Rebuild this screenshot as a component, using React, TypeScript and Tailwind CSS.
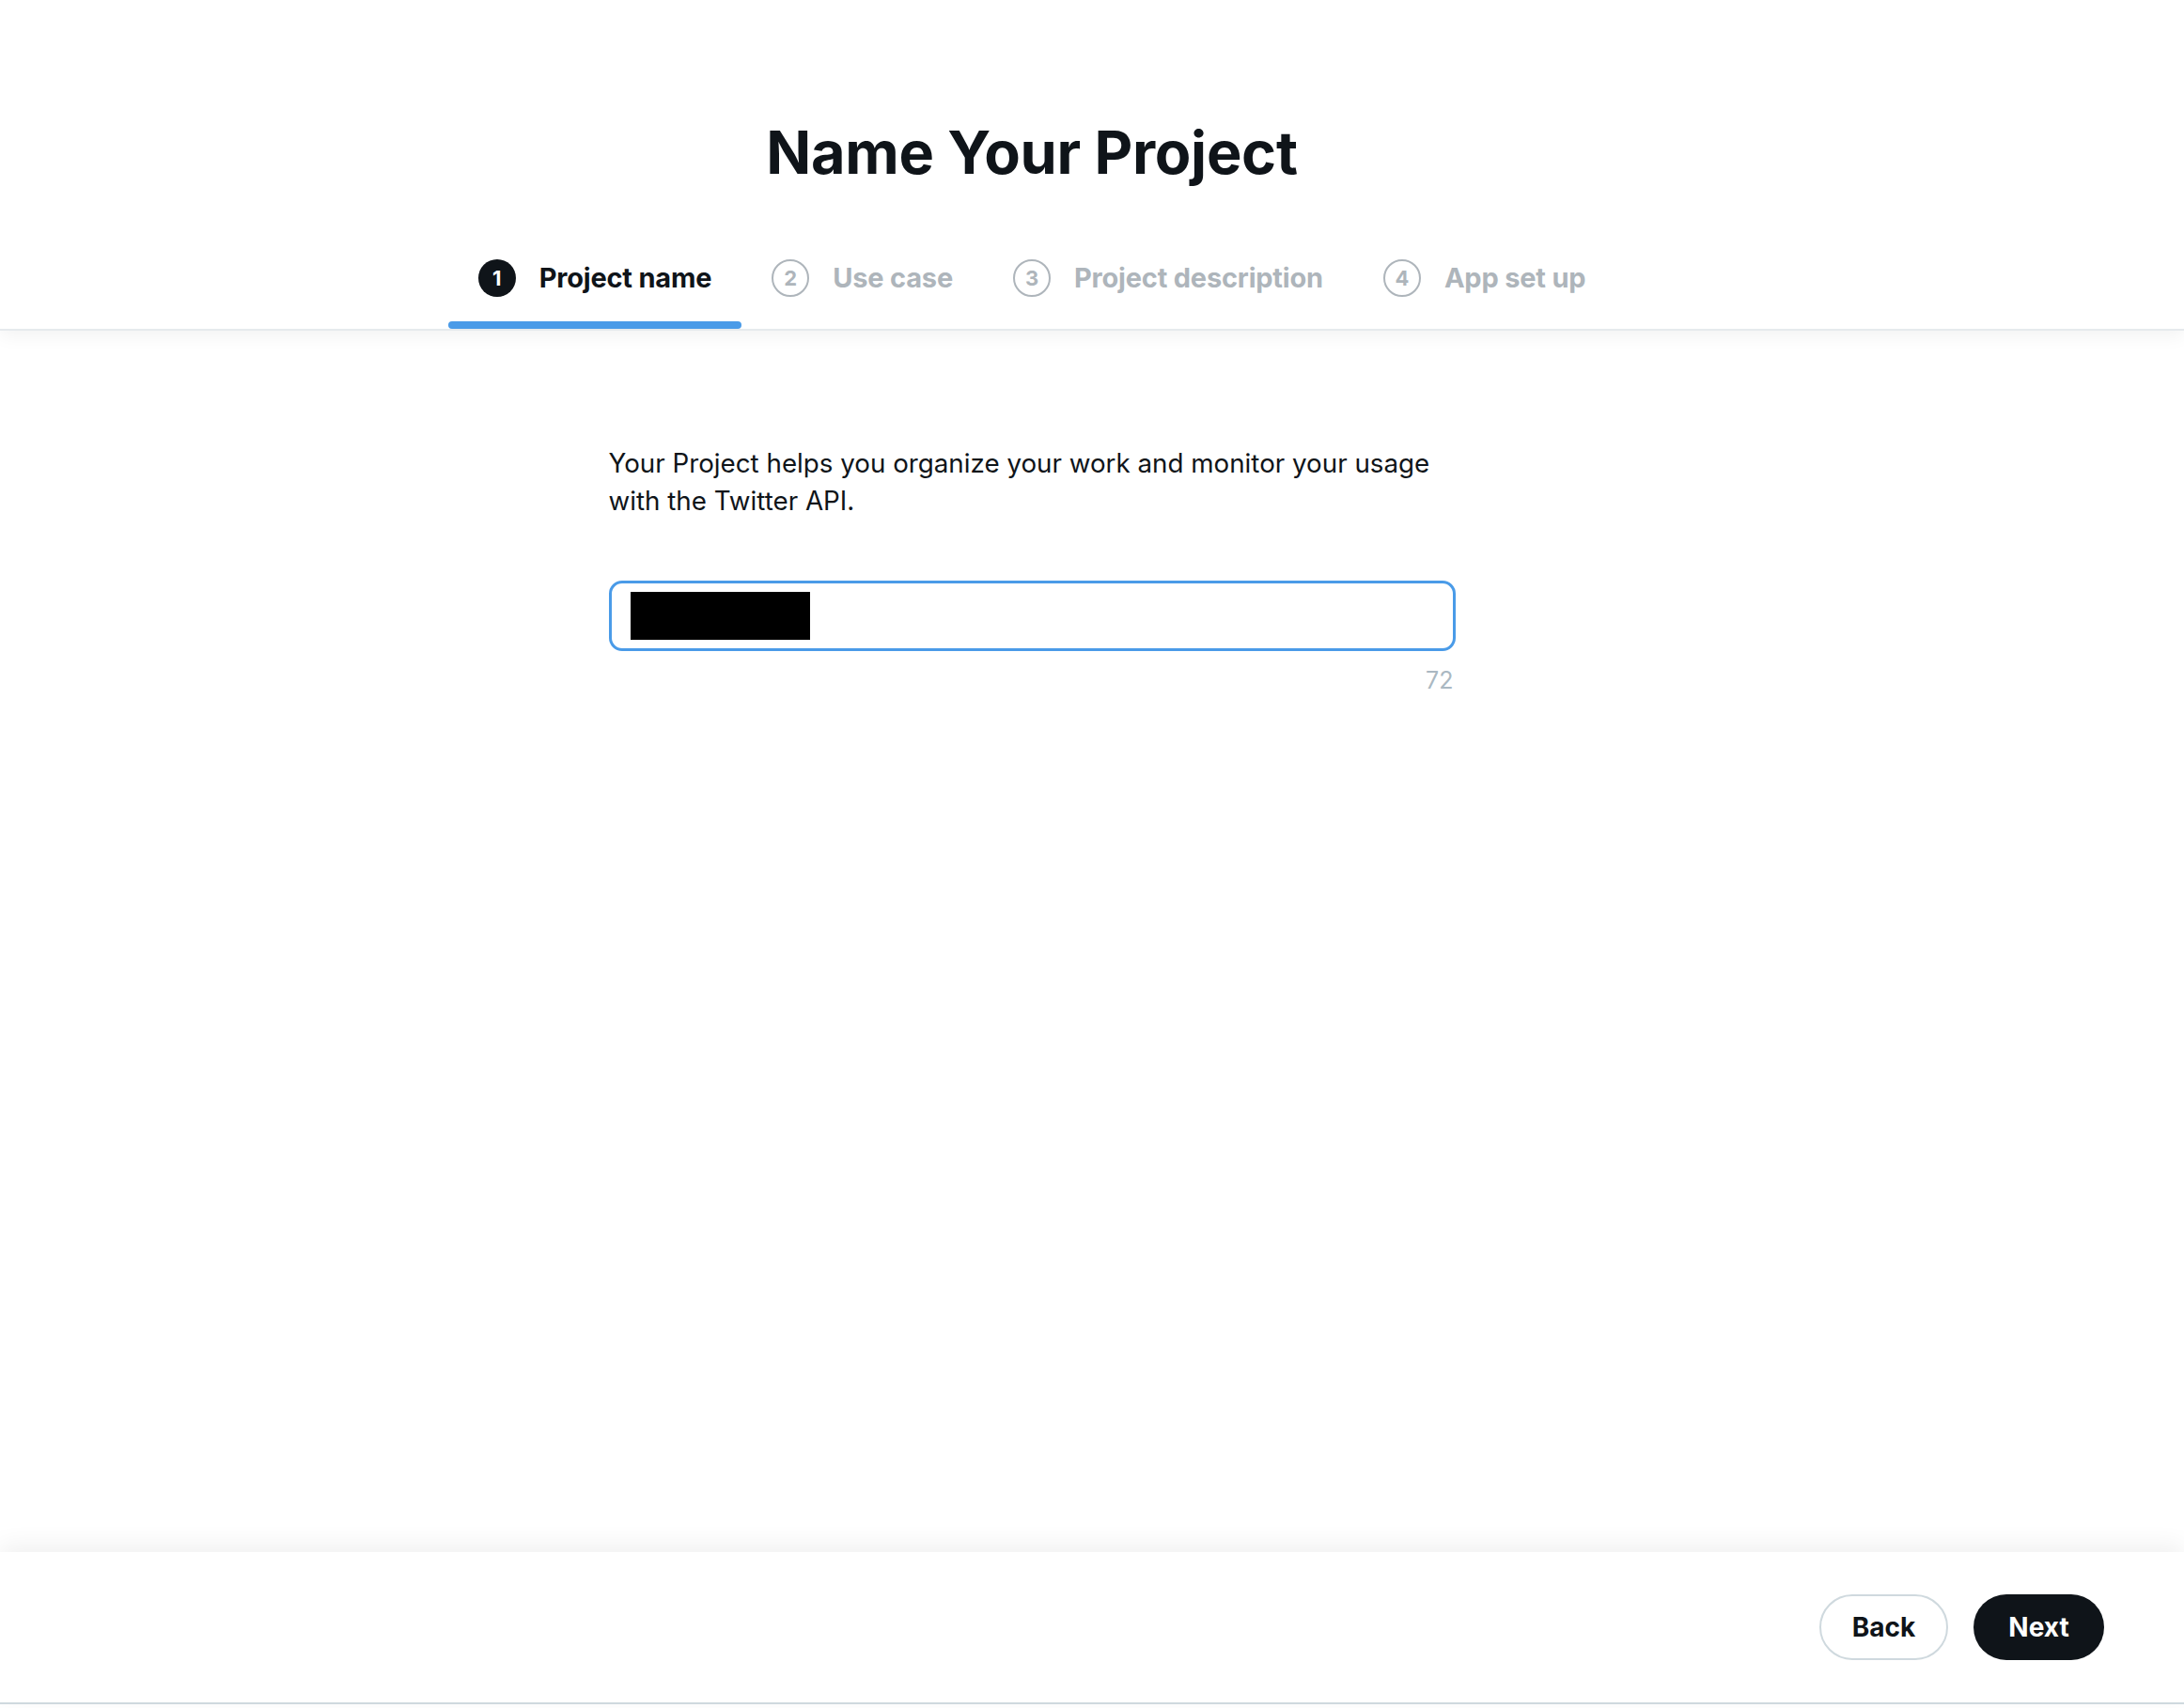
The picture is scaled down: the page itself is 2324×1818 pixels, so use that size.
import React from 'react';

const steps = [
  { n: 1, label: 'Project name' },
  { n: 2, label: 'Use case' },
  { n: 3, label: 'Project description' },
  { n: 4, label: 'App set up' },
];

function StepTab({ n, label, active }: { n: number; label: string; active: boolean }) {
  return (
    <div className="flex flex-col">
      <div className="mt-[76px] flex h-[40px] items-center gap-[25px] px-8">
        <span
          className={
            active
              ? 'flex h-[40px] w-[40px] items-center justify-center rounded-full bg-[#0f1419] text-[22px] font-bold text-white'
              : 'flex h-[40px] w-[40px] items-center justify-center rounded-full border-2 border-[#aeb5bb] text-[22px] font-bold text-[#aeb5bb]'
          }
        >
          {n}
        </span>
        <span
          className={
            active
              ? 'text-[29px] font-bold leading-[40px] tracking-[-0.2px] text-[#0f1419]'
              : 'text-[29px] font-bold leading-[40px] tracking-[-0.2px] text-[#aeb5bb]'
          }
        >
          {label}
        </span>
      </div>
      <div
        className={active ? 'mt-[26px] h-2 rounded-full bg-[#4a9be8]' : 'mt-[26px] h-2'}
      />
    </div>
  );
}

export default function App() {
  return (
    <div
      className="flex h-[1818px] flex-col bg-white text-[#0f1419]"
      style={{ fontFamily: 'Inter, "Noto Sans", sans-serif' }}
    >
      <header className="relative z-10 border-b-2 border-[#e6eaed] bg-white shadow-[0_6px_18px_rgba(0,0,0,0.05)]">
        <div className="flex flex-col items-center pr-[128px]">
          <h1 className="pt-[124px] text-[63px] font-bold leading-[76px] tracking-[-0.3px]">
            Name Your Project
          </h1>
          <nav className="flex">
            {steps.map((s) => (
              <StepTab key={s.n} n={s.n} label={s.label} active={s.n === 1} />
            ))}
          </nav>
        </div>
      </header>

      <main className="flex-1 pr-[128px]">
        <div className="mx-auto w-[901px] pt-[121px]">
          <p className="text-[27.75px] leading-[40px]">
            Your Project helps you organize your work and monitor your usage with the Twitter
            API.
          </p>
          <div className="mt-[65px] flex h-[75px] items-start rounded-[14px] border-[3px] border-[#4a9be8] pl-[20px] pt-[9px]">
            <div className="h-[51px] w-[191px] bg-black" />
          </div>
          <div className="mt-4 pr-[2px] text-right text-[25px] leading-[30px] text-[#aab8c2]">
            72
          </div>
        </div>
      </main>

      <footer className="relative z-10 mb-[4px] flex h-[162px] items-center justify-end gap-[27px] border-b-2 border-[#cfd9de] bg-white pr-[85px] shadow-[0_-8px_24px_rgba(0,0,0,0.06)]">
        <button className="flex h-[70px] w-[137px] items-center justify-center rounded-full border-2 border-[#cfd9de] text-[28px] font-bold text-[#0f1419]">
          Back
        </button>
        <button className="flex h-[70px] w-[139px] items-center justify-center rounded-full bg-[#0f1419] text-[28px] font-bold text-white">
          Next
        </button>
      </footer>
    </div>
  );
}
